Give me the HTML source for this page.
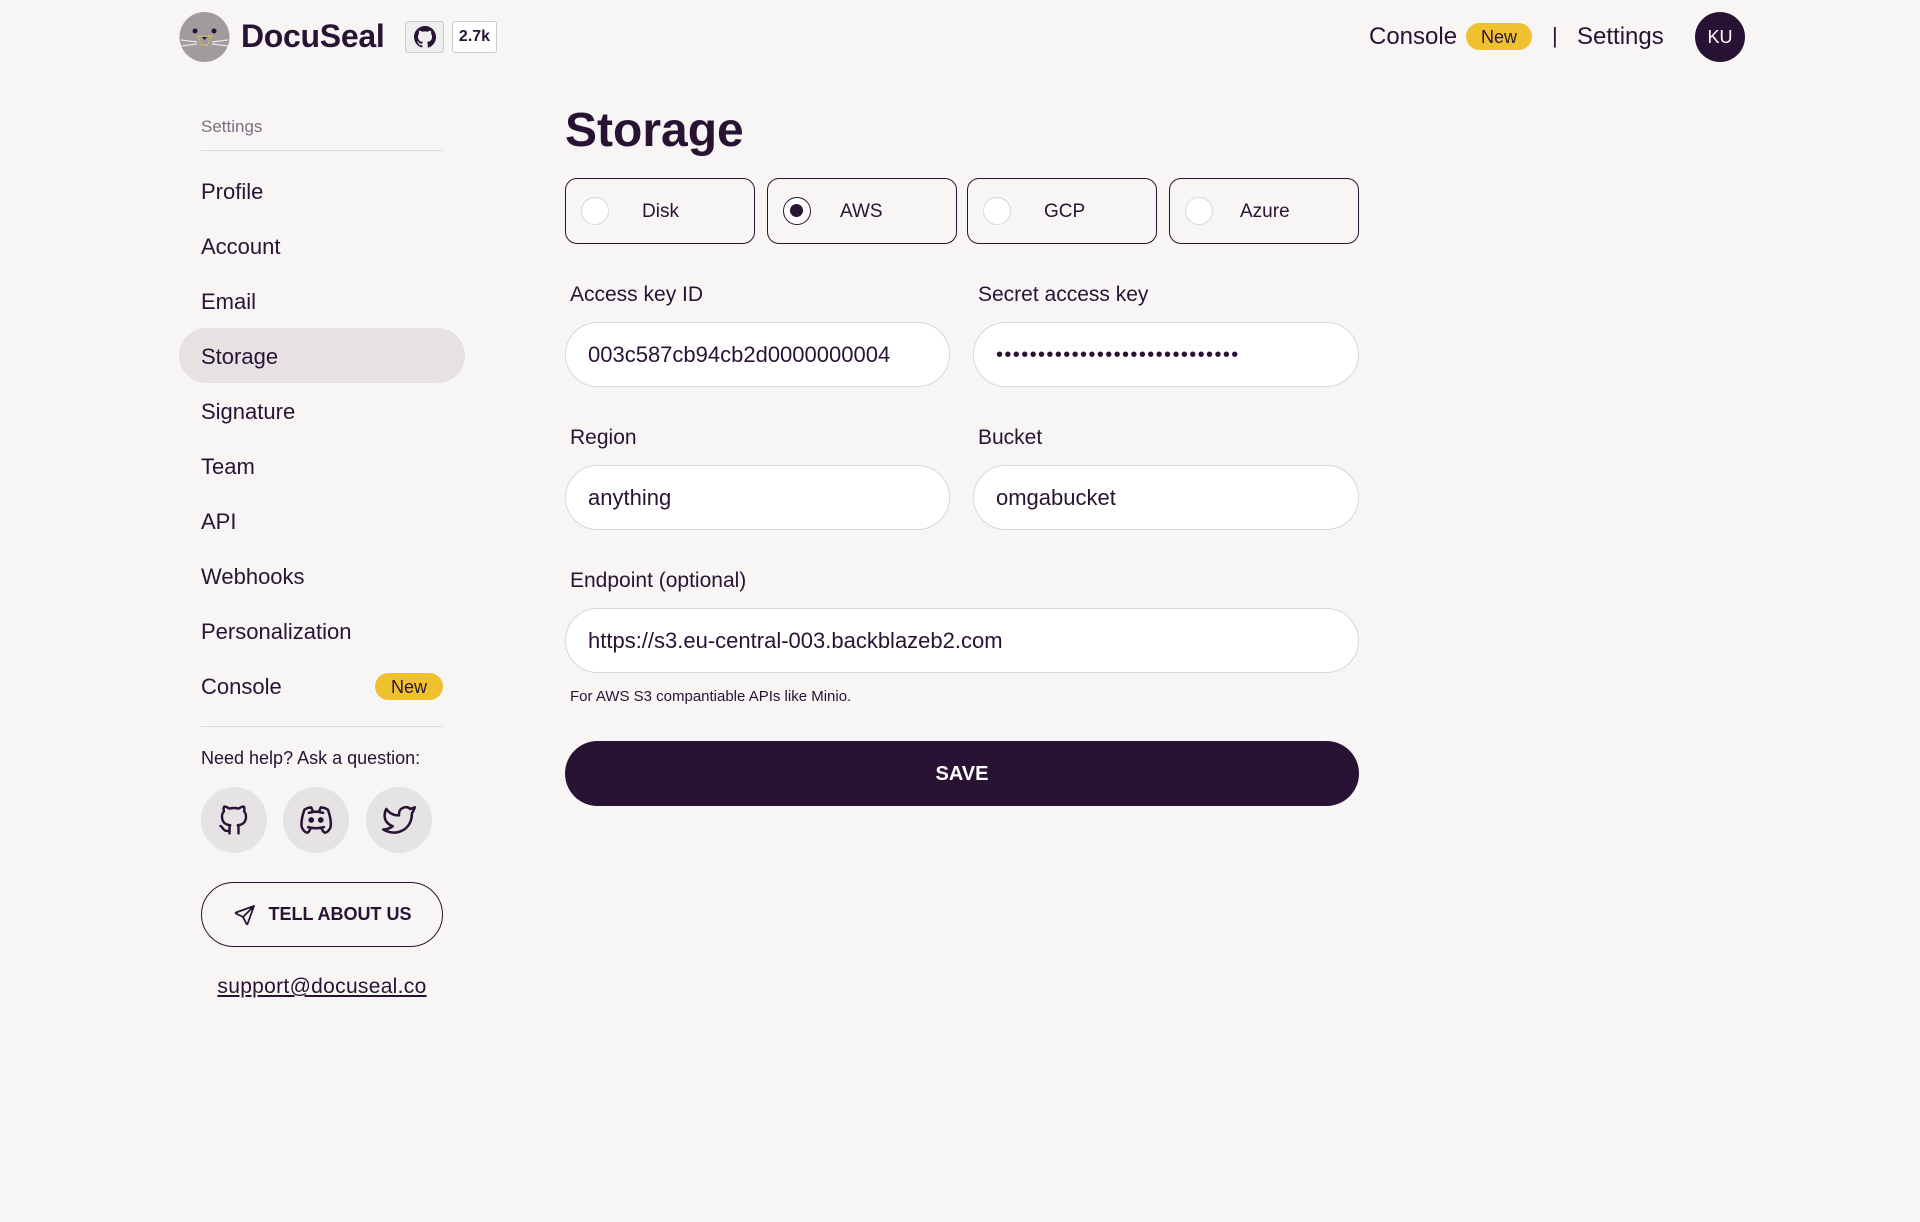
<!DOCTYPE html>
<html><head><meta charset="utf-8"><style>
*{box-sizing:border-box;margin:0;padding:0}
body{width:1920px;height:1222px;background:#f7f6f4;color:#291334;font-family:"Liberation Sans",sans-serif;position:relative;overflow:hidden}
.a{position:absolute}
.nav{font-size:22px;left:201px}
.inp{position:absolute;height:65px;border:1.5px solid #d9d6dc;background:#fff;border-radius:33px;font-size:22px;padding-left:22px;line-height:64px}
.lbl{position:absolute;font-size:21px}
.rb{position:absolute;top:178px;height:66px;width:190px;border:1.5px solid #291334;border-radius:12px;font-size:19px}
.rb .c{position:absolute;left:15px;top:18px;width:28px;height:28px;border-radius:50%;border:1.5px solid #d9d6dc;background:#fff}
.rb span{position:absolute;left:76px;top:22px}
.soc{position:absolute;top:787px;width:66px;height:66px;border-radius:50%;background:#e6e3e5;display:flex;align-items:center;justify-content:center}
</style></head><body>
<svg class="a" style="left:179px;top:12px" width="51" height="50" viewBox="0 0 51 50"><circle cx="25.5" cy="25" r="25" fill="#a19b9d"/><circle cx="16" cy="19" r="2.5" fill="#291334"/><circle cx="35" cy="19" r="2.5" fill="#291334"/><path d="M19 24h13l-3 9h-7z" fill="none" stroke="#e8c547" stroke-dasharray="1 1.5" stroke-width="2"/><path d="M23 25l2.5 3 2.5-3z" fill="#291334"/><path d="M2 28l16 2M2 34l16-2M49 28l-16 2M49 34l-16-2" stroke="#e8e4e6" stroke-width="1.2"/></svg>
<div class="a" style="left:241px;top:18px;font-size:32px;font-weight:bold;letter-spacing:-0.3px">DocuSeal</div>
<div class="a" style="left:405px;top:21px;width:39px;height:32px;border:1px solid #ccc;border-radius:3px;background:#eee;display:flex;align-items:center;justify-content:center"><svg width="22" height="22" viewBox="0 0 16 16"><path fill="#291334" d="M8 0C3.58 0 0 3.58 0 8c0 3.54 2.290 6.530 5.470 7.590.4.07.55-.17.55-.38v-1.33c-2.23.48-2.7-1.07-2.7-1.07-.36-.92-.89-1.17-.89-1.170-.73-.5.06-.49.06-.49.8.06 1.23.83 1.23.83.72 1.22 1.870.87 2.330.66.07-.52.28-.87.5-1.07-1.78-.2-3.640-.89-3.640-3.950 0-.87.31-1.590.82-2.150-.08-.2-.36-1.020.08-2.120 0 0 .67-.21 2.2.82a7.6 7.6 0 014 0c1.53-1.040 2.2-.82 2.2-.82.44 1.1.16 1.920.08 2.120.51.56.82 1.270.82 2.150 0 3.070-1.870 3.750-3.650 3.950.29.25.54.73.54 1.480v2.2c0 .21.15.46.55.38A8.01 8.01 0 0016 8c0-4.420-3.580-8-8-8z"/></svg></div>
<div class="a" style="left:452px;top:21px;width:45px;height:32px;border:1px solid #ccc;border-radius:3px;background:#fff;font-size:16px;font-weight:bold;text-align:center;line-height:30px">2.7k</div>
<div class="a" style="left:1369px;top:23px;font-size:24px">Console</div>
<div class="a" style="left:1466px;top:23px;width:66px;height:27px;border-radius:14px;background:#efc12f;font-size:18px;text-align:center;line-height:28px">New</div>
<div class="a" style="left:1552px;top:23px;font-size:22px">|</div>
<div class="a" style="left:1577px;top:23px;font-size:24px">Settings</div>
<div class="a" style="left:1695px;top:12px;width:50px;height:50px;border-radius:50%;background:#291334;color:#fff;font-size:18px;text-align:center;line-height:50px">KU</div>

<div class="a" style="left:201px;top:117px;font-size:17px;color:#7a6e80">Settings</div>
<div class="a" style="left:201px;top:150px;width:242px;height:1px;background:#ddd9dc"></div>
<div class="a" style="left:179px;top:328px;width:286px;height:55px;border-radius:28px;background:#e6e2e2"></div>
<div class="a nav" style="top:179px">Profile</div>
<div class="a nav" style="top:234px">Account</div>
<div class="a nav" style="top:289px">Email</div>
<div class="a nav" style="top:344px">Storage</div>
<div class="a nav" style="top:399px">Signature</div>
<div class="a nav" style="top:454px">Team</div>
<div class="a nav" style="top:509px">API</div>
<div class="a nav" style="top:564px">Webhooks</div>
<div class="a nav" style="top:619px">Personalization</div>
<div class="a nav" style="top:674px">Console</div>
<div class="a" style="left:375px;top:673px;width:68px;height:27px;border-radius:14px;background:#efc12f;font-size:18px;text-align:center;line-height:28px">New</div>
<div class="a" style="left:201px;top:726px;width:242px;height:1px;background:#ddd9dc"></div>
<div class="a" style="left:201px;top:748px;font-size:18px">Need help? Ask a question:</div>
<div class="soc" style="left:201px"><svg width="36" height="36" viewBox="0 0 24 24" fill="none" stroke="#291334" stroke-width="1.6" stroke-linecap="round" stroke-linejoin="round"><path d="M9 19c-4.3 1.4-4.3-2.5-6-3m12 5v-3.5c0-1 .1-1.4-.5-2 2.8-.3 5.5-1.4 5.5-6a4.6 4.6 0 00-1.3-3.2 4.2 4.2 0 00-.1-3.2s-1.1-.3-3.5 1.3a12.3 12.3 0 00-6.2 0C6.5 2.8 5.4 3.1 5.4 3.1a4.2 4.2 0 00-.1 3.2A4.6 4.6 0 004 9.5c0 4.6 2.7 5.7 5.5 6-.6.6-.6 1.2-.5 2V21"/></svg></div>
<div class="soc" style="left:283px"><svg width="38" height="38" viewBox="0 0 24 24" fill="none" stroke="#291334" stroke-width="1.6" stroke-linecap="round" stroke-linejoin="round"><circle cx="9" cy="12" r="1" fill="#291334"/><circle cx="15" cy="12" r="1" fill="#291334"/><path d="M7.5 7.5c3.5-1 5.5-1 9 0M7 16.5c3.5 1 6.5 1 10 0"/><path d="M15.5 17c0 1 1.5 3 2 3 1.5 0 2.8-1.7 3.5-3 .7-1.7.5-6-1.5-11.5-1.5-1-3-1.4-4.5-1.5l-1 2.5M8.5 17c0 1-1.4 3-1.9 3-1.5 0-2.7-1.7-3.4-3-.7-1.7-.5-6 1.5-11.5C6.1 4.5 7.6 4.1 9 4l1 2.5"/></svg></div>
<div class="soc" style="left:366px"><svg width="38" height="38" viewBox="0 0 24 24" fill="none" stroke="#291334" stroke-width="1.6" stroke-linecap="round" stroke-linejoin="round"><path d="M22 4.01c-1 .49-1.98.69-3 .99-1.12-1.26-2.78-1.33-4.38-.73S11.99 6.38 12 8.08v1c-3.25.08-6.14-1.4-8-4.08 0 0-4.19 7.45 4 11-1.87 1.25-3.740 2.090-6 2 3.3 1.8 6.9 2.42 10.010 1.510 3.570-1.040 6.5-3.720 7.630-7.740.33-1.220.5-2.480.5-3.760 0-.25 1.510-2.770 1.860-4.010z"/></svg></div>
<div class="a" style="left:201px;top:882px;width:242px;height:65px;border:1.5px solid #291334;border-radius:33px;display:flex;align-items:center;justify-content:center;font-size:18px;font-weight:bold;gap:12px"><svg width="24" height="24" viewBox="0 0 24 24" fill="none" stroke="#291334" stroke-width="1.8" stroke-linecap="round" stroke-linejoin="round"><path d="M10 14L21 3M21 3l-6.5 18a.55.55 0 01-1 0L10 14l-7-3.5a.55.55 0 010-1z"/></svg>TELL ABOUT US</div>
<div class="a" style="left:201px;width:242px;top:975px;text-align:center;font-size:21px;text-decoration:underline;letter-spacing:0.3px">support@docuseal.co</div>

<div class="a" style="left:565px;top:103px;font-size:48px;font-weight:bold">Storage</div>
<div class="rb" style="left:565px"><div class="c"></div><span>Disk</span></div>
<div class="rb" style="left:767px"><div class="c" style="border:1.5px solid #291334"><div style="position:absolute;left:6px;top:6px;width:13px;height:13px;border-radius:50%;background:#291334"></div></div><span style="left:72px">AWS</span></div>
<div class="rb" style="left:967px"><div class="c"></div><span style="left:76px">GCP</span></div>
<div class="rb" style="left:1169px"><div class="c"></div><span style="left:70px">Azure</span></div>
<div class="lbl" style="left:570px;top:283px">Access key ID</div>
<div class="lbl" style="left:978px;top:283px">Secret access key</div>
<div class="inp" style="left:565px;top:322px;width:385px">003c587cb94cb2d0000000004</div>
<div class="inp" style="left:973px;top:322px;width:386px;letter-spacing:1.4px;font-size:20px">•••••••••••••••••••••••••••••</div>
<div class="lbl" style="left:570px;top:426px">Region</div>
<div class="lbl" style="left:978px;top:426px">Bucket</div>
<div class="inp" style="left:565px;top:465px;width:385px">anything</div>
<div class="inp" style="left:973px;top:465px;width:386px">omgabucket</div>
<div class="lbl" style="left:570px;top:569px">Endpoint (optional)</div>
<div class="inp" style="left:565px;top:608px;width:794px">https://s3.eu-central-003.backblazeb2.com</div>
<div class="a" style="left:570px;top:688px;font-size:15px">For AWS S3 compantiable APIs like Minio.</div>
<div class="a" style="left:565px;top:741px;width:794px;height:65px;border-radius:33px;background:#291334;color:#fff;font-size:20px;font-weight:bold;text-align:center;line-height:67px">SAVE</div>
</body></html>
